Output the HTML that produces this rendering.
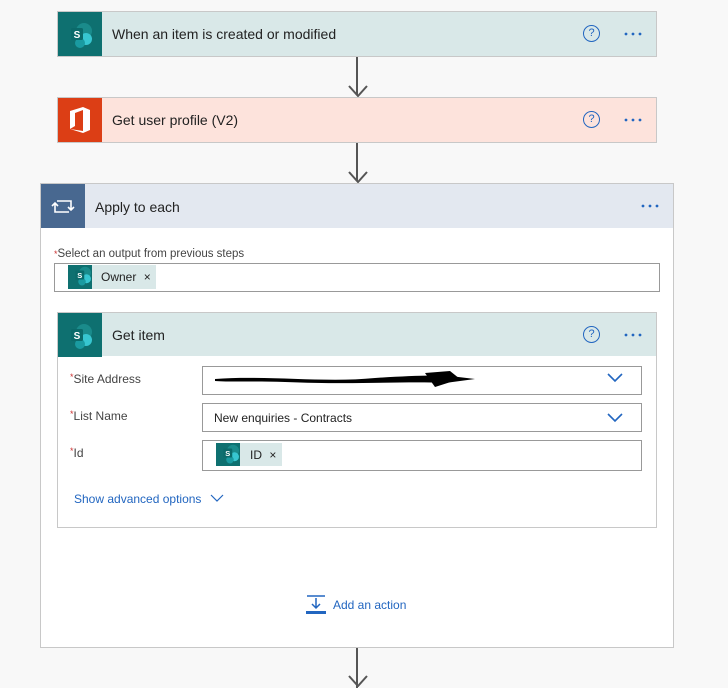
<!DOCTYPE html>
<html><head><style>
body{margin:0;width:728px;height:688px;background:#f8f8f8;font-family:"Liberation Sans",sans-serif;position:relative;overflow:hidden;color:#222}
.abs{position:absolute;box-sizing:border-box}
.card{border:1px solid #c8c8c8}
.t{font-size:14px}
.line{position:absolute;left:356px;width:2px;background:#555}
.help{position:absolute;width:15px;height:15px;border:1.3px solid #2266c0;border-radius:50%;color:#2266c0;font-size:11px;text-align:center;line-height:15px}
.lbl{position:absolute;left:70px;font-size:12px;color:#444}
.lbl b{color:#c33;font-weight:normal;font-size:9px;vertical-align:top}
.inp{position:absolute;left:202px;width:440px;background:#fff;border:1px solid #999;box-sizing:border-box;font-size:12px}
.chev{position:absolute;right:18px;top:6px}
</style></head><body>
<svg width="0" height="0" style="position:absolute"><defs>
<g id="sp"><circle cx="24" cy="17" r="8" fill="#1a8b8b"/><circle cx="26" cy="25" r="6" fill="#37c6d0"/><circle cx="20" cy="29" r="5" fill="#1a9ba1"/><rect x="11" y="14" width="12" height="12" rx="1.5" fill="#0b6a6a"/><text x="17" y="24" fill="#fff" font-size="10" font-weight="bold" text-anchor="middle" font-family="Liberation Sans">S</text></g>
<g id="arr"><path d="M-9,-10 L0,0 L9,-10" stroke="#555" stroke-width="2" fill="none"/></g>
<g id="dt"><circle cx="2" cy="2" r="1.4" fill="#2266c0"/><circle cx="9" cy="2" r="1.4" fill="#2266c0"/><circle cx="16" cy="2" r="1.4" fill="#2266c0"/></g>
</defs></svg>

<!-- card1 -->
<div class="abs card" style="left:57px;top:11px;width:600px;height:46px;background:#d9e8e8"></div>
<svg class="abs" style="left:58px;top:12px" width="44" height="44"><rect width="44" height="44" fill="#0e7070"/><use href="#sp" transform="translate(2,2)"/></svg>
<div class="abs t" style="left:112px;top:26px">When an item is created or modified</div>
<div class="help" style="left:583px;top:25px">?</div>
<svg class="abs" style="left:624px;top:32px" width="20" height="5"><use href="#dt"/></svg>
<div class="line" style="top:57px;height:38px"></div>
<svg class="abs" style="left:347px;top:85px" width="22" height="12"><use href="#arr" transform="translate(11,11)"/></svg>

<!-- card2 -->
<div class="abs card" style="left:57px;top:97px;width:600px;height:46px;background:#fde3dc"></div>
<svg class="abs" style="left:58px;top:98px" width="44" height="44"><rect width="44" height="44" fill="#dc3e15"/><path d="M12,13 L25,9 L32,12 L32,32 L25,35 L12,31 L25,33 L25,12 L17,15 L17,28 L12,31 Z" fill="#fff"/></svg>
<div class="abs t" style="left:112px;top:112px">Get user profile (V2)</div>
<div class="help" style="left:583px;top:111px">?</div>
<svg class="abs" style="left:624px;top:118px" width="20" height="5"><use href="#dt"/></svg>
<div class="line" style="top:143px;height:38px"></div>
<svg class="abs" style="left:347px;top:171px" width="22" height="12"><use href="#arr" transform="translate(11,11)"/></svg>

<!-- apply -->
<div class="abs card" style="left:40px;top:183px;width:634px;height:465px;background:#fff"></div>
<div class="abs" style="left:41px;top:184px;width:632px;height:44px;background:#e3e8f0"></div>
<svg class="abs" style="left:41px;top:184px" width="44" height="44"><rect width="44" height="44" fill="#486890"/><path d="M16,17 L30,17 L30,26 M27,23 L30,26 L33,23 M28,28 L14,28 L14,19 M11,22 L14,19 L17,22" stroke="#fff" stroke-width="1.6" fill="none"/></svg>
<div class="abs t" style="left:95px;top:199px">Apply to each</div>
<svg class="abs" style="left:641px;top:204px" width="20" height="5"><use href="#dt"/></svg>
<div class="abs" style="left:54px;top:248px;font-size:11.5px;color:#444"><span style="color:#c33;font-size:9px">*</span>Select an output from previous steps</div>
<div class="abs" style="left:54px;top:263px;width:606px;height:29px;border:1px solid #999;background:#fff"></div>
<div class="abs" style="left:68px;top:265px;width:88px;height:24px;background:#d9e8e8"></div>
<svg class="abs" style="left:68px;top:265px" width="24" height="24"><rect width="24" height="24" fill="#0e7070"/><use href="#sp" transform="translate(-1,-5) scale(0.75)"/></svg>
<div class="abs" style="left:101px;top:270px;font-size:12px">Owner <span style="margin-left:4px">×</span></div>

<!-- get item -->
<div class="abs card" style="left:57px;top:312px;width:600px;height:216px;background:#fff"></div>
<div class="abs" style="left:58px;top:313px;width:598px;height:43px;background:#d9e8e8"></div>
<svg class="abs" style="left:58px;top:313px" width="44" height="44"><rect width="44" height="44" fill="#0e7070"/><use href="#sp" transform="translate(2,2)"/></svg>
<div class="abs t" style="left:112px;top:327px">Get item</div>
<div class="help" style="left:583px;top:326px">?</div>
<svg class="abs" style="left:624px;top:333px" width="20" height="5"><use href="#dt"/></svg>

<div class="lbl" style="top:372px"><b>*</b>Site Address</div>
<div class="inp" style="top:366px;height:29px"><svg class="abs" style="left:2px;top:0" width="280" height="25"><path d="M10,12 C60,8 120,16 170,11 C200,9 225,8 245,9 L270,12 L240,16 C200,14 150,18 80,15 C50,14 20,15 10,14Z" fill="#000"/><path d="M220,6 L245,4 L255,12 L230,20 Z" fill="#000"/></svg><svg class="chev" width="16" height="10"><path d="M1,1 L8,8 L15,1" stroke="#2266c0" stroke-width="1.6" fill="none"/></svg></div>
<div class="lbl" style="top:409px"><b>*</b>List Name</div>
<div class="inp" style="top:403px;height:29px"><span style="position:absolute;left:11px;top:7px">New enquiries - Contracts</span><svg class="chev" width="16" height="10" style="top:9px"><path d="M1,1 L8,8 L15,1" stroke="#2266c0" stroke-width="1.6" fill="none"/></svg></div>
<div class="lbl" style="top:446px"><b>*</b>Id</div>
<div class="inp" style="top:440px;height:31px"></div>
<div class="abs" style="left:216px;top:443px;width:66px;height:23px;background:#d9e8e8"></div>
<svg class="abs" style="left:216px;top:443px" width="24" height="23"><rect width="24" height="23" fill="#0e7070"/><use href="#sp" transform="translate(-1,-5) scale(0.75)"/></svg>
<div class="abs" style="left:250px;top:448px;font-size:12px">ID <span style="margin-left:4px">×</span></div>
<div class="abs" style="left:74px;top:492px;font-size:12px;color:#2266c0">Show advanced options <svg width="14" height="9" style="margin-left:5px"><path d="M1,1 L7,7 L13,1" stroke="#2266c0" stroke-width="1.2" fill="none"/></svg></div>

<svg class="abs" style="left:305px;top:594px" width="24" height="22"><path d="M2,2 L20,2 M11,4 L11,13 M7,10 L11,14 L15,10" stroke="#2266c0" stroke-width="1.5" fill="none"/><rect x="1" y="17" width="20" height="3" fill="#2266c0"/></svg>
<div class="abs" style="left:333px;top:598px;font-size:12px;color:#2266c0">Add an action</div>

<div class="line" style="top:648px;height:40px"></div>
<svg class="abs" style="left:347px;top:675px" width="22" height="12"><use href="#arr" transform="translate(11,11)"/></svg>
</body></html>
